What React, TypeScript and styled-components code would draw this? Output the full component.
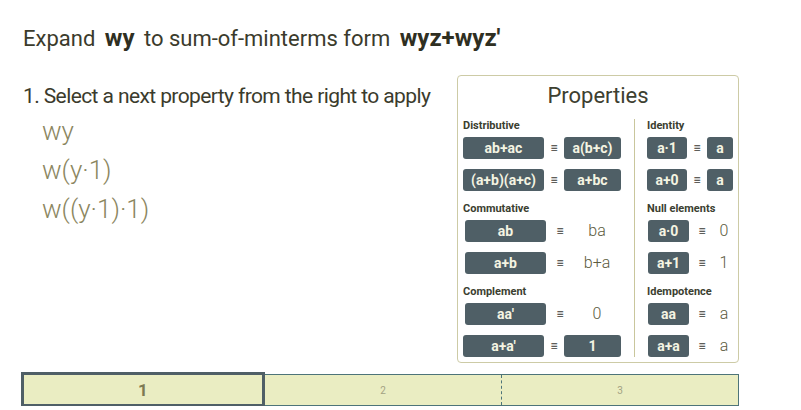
import React from "react";
import styled, { createGlobalStyle } from "styled-components";

const Global = createGlobalStyle`
  html, body { margin: 0; padding: 0; background: #ffffff; }
  body { font-family: Roboto, "Liberation Sans", sans-serif; }
`;

const Page = styled.div`
  width: 718px;
  padding: 25px 0 0 21px;
`;

const Title = styled.h1`
  margin: 0 0 0 2px;
  height: 26px;
  font-size: 22px;
  line-height: 26px;
  font-weight: 400;
  color: #3b3b2c;
  white-space: nowrap;
`;

const Strong = styled.b`
  font-size: 24px;
  font-weight: 700;
  color: #2f2f22;
  margin: 0 4px;
`;

const Main = styled.div`
  display: flex;
  margin-top: 24px;
`;

const Left = styled.div`
  flex: 1;
  min-width: 0;
  padding-top: 7.8px;
`;

const Instruction = styled.div`
  font-size: 21px;
  letter-spacing: -0.6px;
  line-height: 26px;
  color: #3b3b2c;
  margin-left: 2px;
  white-space: nowrap;
`;

const Steps = styled.div`
  margin: 2.8px 0 0 21px;
  display: flex;
  flex-direction: column;
`;

const Step = styled.div`
  font-size: 26px;
  font-weight: 300;
  line-height: 39px;
  color: #8b8660;
`;

const Panel = styled.div`
  flex: 0 0 281px;
  box-sizing: border-box;
  border: 1px solid #cdcba6;
  border-radius: 4px;
  padding: 6.5px 5px 5px 5px;
`;

const PanelTitle = styled.div`
  text-align: center;
  font-size: 22px;
  line-height: 26px;
  color: #3d4030;
`;

const Columns = styled.div`
  display: flex;
  margin-top: 10.5px;
`;

const Col = styled.div<{ $side: "left" | "right" }>`
  display: flex;
  flex-direction: column;
  gap: 12px;
  padding-top: 1px;
  box-sizing: border-box;
  ${(p) =>
    p.$side === "left"
      ? "width: 172px; border-right: 1px solid #c9c69c;"
      : "flex: 1; padding-left: 12px;"}
`;

const Section = styled.div`
  display: flex;
  flex-direction: column;
`;

const Label = styled.div`
  font-size: 11px;
  line-height: 12px;
  font-weight: 700;
  color: #3b4030;
  margin-bottom: 5px;
  white-space: nowrap;
`;

const RowList = styled.div`
  display: flex;
  flex-direction: column;
  gap: 10px;
`;

const Row = styled.div<{ $cols: string; $offset: number }>`
  display: grid;
  grid-template-columns: ${(p) => p.$cols};
  margin-left: ${(p) => p.$offset}px;
  height: 22px;
`;

const Chip = styled.div`
  height: 22px;
  border-radius: 3px;
  background: #4f5f66;
  color: #f4f4e2;
  font-weight: 700;
  font-size: 14px;
  display: flex;
  align-items: center;
  justify-content: center;
  white-space: nowrap;
`;

const Plain = styled.div`
  font-size: 16px;
  font-weight: 300;
  color: #5c5b40;
  text-align: center;
  line-height: 22px;
`;

const Eq = styled.div`
  font-size: 12px;
  font-weight: 700;
  color: #3a3a34;
  text-align: center;
  line-height: 22px;
`;

const Bar = styled.div`
  display: flex;
  height: 32px;
  box-sizing: border-box;
  border: 1px solid #4d7479;
  background: #eaedc2;
  margin-top: 11px;
`;

const Segment = styled.div<{ $active?: boolean; $dashed?: boolean }>`
  display: flex;
  align-items: center;
  justify-content: center;
  box-sizing: border-box;
  ${(p) =>
    p.$active
      ? `width: 244px; margin: -3px 0 -2px -1px; border: 3px solid #4f5f66;
         font-size: 17px; font-weight: 700; color: #7d7a52;`
      : `flex: 1; font-size: 10px; color: #a3a283;`}
  ${(p) => (p.$dashed ? "border-right: 1px dashed #4d7479;" : "")}
`;

type Side = { text: string; chip: boolean };
type RowDef = [Side, Side];
type SectionDef = { label: string; rows: RowDef[] };

const c = (text: string): Side => ({ text, chip: true });
const t = (text: string): Side => ({ text, chip: false });

const leftSections: SectionDef[] = [
  { label: "Distributive", rows: [[c("ab+ac"), c("a(b+c)")], [c("(a+b)(a+c)"), c("a+bc")]] },
  { label: "Commutative", rows: [[c("ab"), t("ba")], [c("a+b"), t("b+a")]] },
  { label: "Complement", rows: [[c("aa'"), t("0")], [c("a+a'"), c("1")]] },
];

const rightSections: SectionDef[] = [
  { label: "Identity", rows: [[c("a·1"), c("a")], [c("a+0"), c("a")]] },
  { label: "Null elements", rows: [[c("a·0"), t("0")], [c("a+1"), t("1")]] },
  { label: "Idempotence", rows: [[c("aa"), t("a")], [c("a+a"), t("a")]] },
];

const layouts = {
  left: { chip: { cols: "81px 20px 57px", offset: 0 }, plain: { cols: "81px 28px 46px", offset: 2 } },
  right: { chip: { cols: "40px 20px 26px", offset: 0 }, plain: { cols: "41px 26px 18px", offset: 1 } },
};

function Column({ side, sections }: { side: "left" | "right"; sections: SectionDef[] }) {
  return (
    <Col $side={side}>
      {sections.map((s) => (
        <Section key={s.label}>
          <Label>{s.label}</Label>
          <RowList>
            {s.rows.map(([l, r], i) => {
              const lay = r.chip ? layouts[side].chip : layouts[side].plain;
              return (
                <Row key={i} $cols={lay.cols} $offset={lay.offset}>
                  <Chip>{l.text}</Chip>
                  <Eq>≡</Eq>
                  {r.chip ? <Chip>{r.text}</Chip> : <Plain>{r.text}</Plain>}
                </Row>
              );
            })}
          </RowList>
        </Section>
      ))}
    </Col>
  );
}

export default function App() {
  return (
    <>
      <Global />
      <Page>
        <Title>
          Expand <Strong>wy</Strong> to sum-of-minterms form <Strong>wyz+wyz'</Strong>
        </Title>
        <Main>
          <Left>
            <Instruction>1. Select a next property from the right to apply</Instruction>
            <Steps>
              <Step>wy</Step>
              <Step>w(y·1)</Step>
              <Step>w((y·1)·1)</Step>
            </Steps>
          </Left>
          <Panel>
            <PanelTitle>Properties</PanelTitle>
            <Columns>
              <Column side="left" sections={leftSections} />
              <Column side="right" sections={rightSections} />
            </Columns>
          </Panel>
        </Main>
        <Bar>
          <Segment $active>1</Segment>
          <Segment $dashed>2</Segment>
          <Segment>3</Segment>
        </Bar>
      </Page>
    </>
  );
}
